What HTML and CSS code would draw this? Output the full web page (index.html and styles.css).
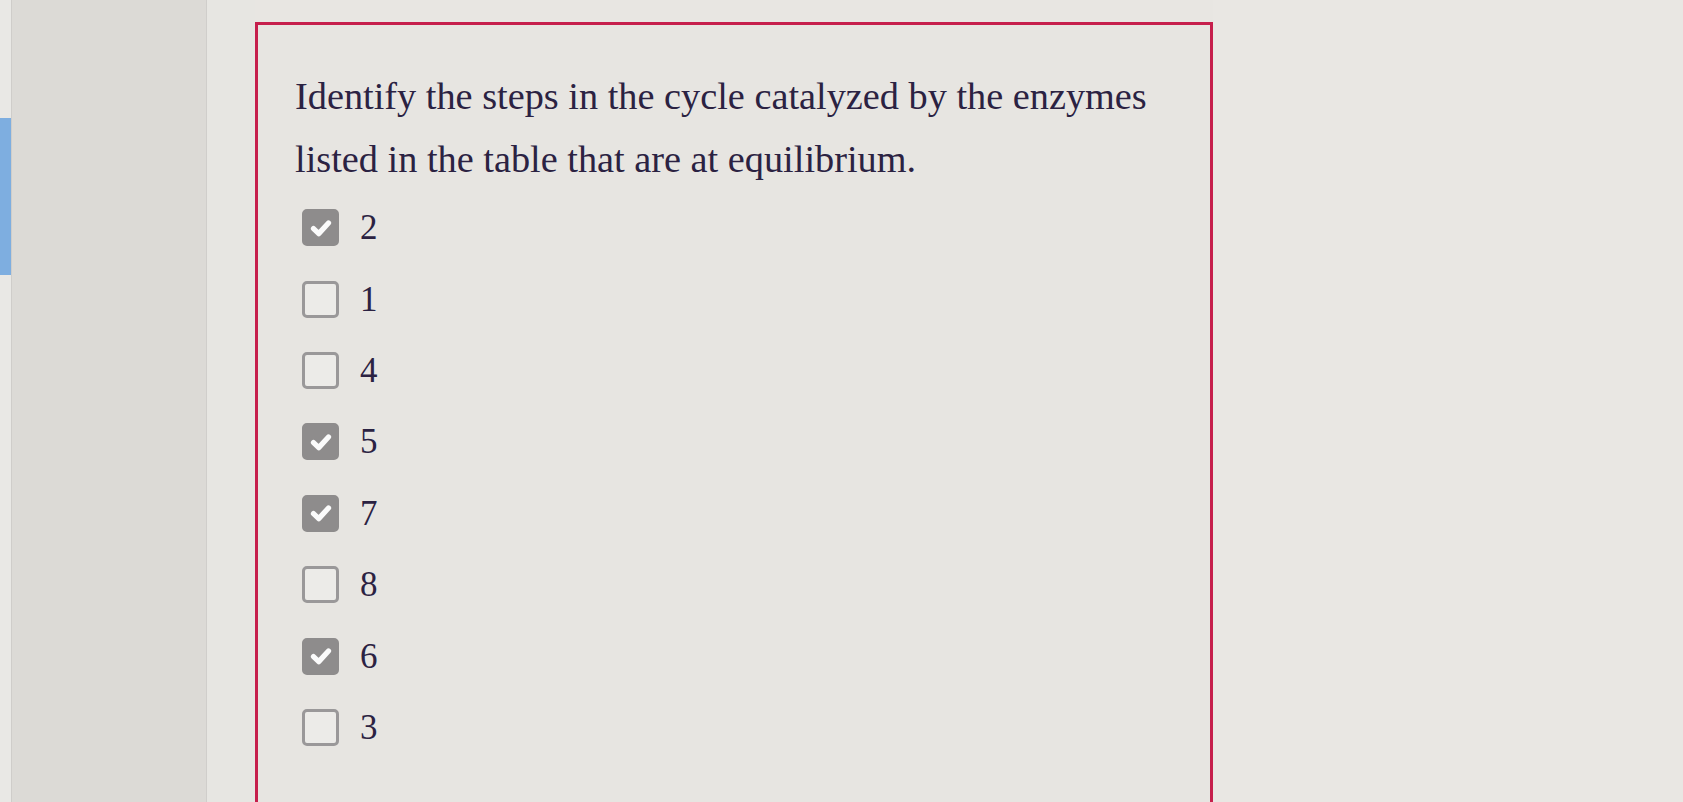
FILE: index.html
```html
<!DOCTYPE html>
<html lang="en">
<head>
<meta charset="utf-8">
<title>Question</title>
<link rel="stylesheet" href="styles.css">
</head>
<body>
<div class="screen">
  <div class="rail"><div class="rail-tab"></div></div>
  <aside class="sidebar"></aside>
  <div class="gutter"></div>
  <main class="question">
    <p class="prompt">Identify the steps in the cycle catalyzed by the enzymes listed in the table that are at equilibrium.</p>
    <ul class="choices">
      <li class="choice"><span class="box checked"><svg viewBox="0 0 24 24"><path d="M6 12.5 L10.2 16.5 L18 8"/></svg></span><span class="label">2</span></li>
      <li class="choice"><span class="box"></span><span class="label">1</span></li>
      <li class="choice"><span class="box"></span><span class="label">4</span></li>
      <li class="choice"><span class="box checked"><svg viewBox="0 0 24 24"><path d="M6 12.5 L10.2 16.5 L18 8"/></svg></span><span class="label">5</span></li>
      <li class="choice"><span class="box checked"><svg viewBox="0 0 24 24"><path d="M6 12.5 L10.2 16.5 L18 8"/></svg></span><span class="label">7</span></li>
      <li class="choice"><span class="box"></span><span class="label">8</span></li>
      <li class="choice"><span class="box checked"><svg viewBox="0 0 24 24"><path d="M6 12.5 L10.2 16.5 L18 8"/></svg></span><span class="label">6</span></li>
      <li class="choice"><span class="box"></span><span class="label">3</span></li>
    </ul>
  </main>
  <div class="right"></div>
</div>
</body>
</html>
```

FILE: styles.css
```css
html, body {
  margin: 0;
  padding: 0;
  height: 100%;
  overflow: hidden;
  background: #e8e6e2;
}

.screen {
  display: flex;
  height: 802px;
  width: 1683px;
}

.rail {
  width: 11px;
  flex: none;
  background: #e9e8e5;
  padding-top: 118px;
  box-sizing: border-box;
}

.rail-tab {
  width: 13px;
  height: 157px;
  background: #7eaee0;
}

.sidebar {
  width: 194px;
  flex: none;
  background: #dcdad6;
  border-left: 1px solid #cfcdca;
  border-right: 1px solid #d0cecb;
}

.gutter {
  width: 48px;
  flex: none;
  background: #e7e6e2;
}

.question {
  flex: none;
  width: 958px;
  margin-top: 22px;
  border: 3px solid #c61f4c;
  border-bottom: none;
  background: #e7e5e1;
  padding: 40px 26px 0 37px;
  box-sizing: border-box;
  font-family: "Liberation Serif", "Times New Roman", serif;
  color: #2b2242;
}

.prompt {
  margin: 0;
  font-size: 38.3px;
  line-height: 63px;
}

.choices {
  list-style: none;
  margin: 0;
  padding: 1px 0 0 7px;
}

.choice {
  display: flex;
  align-items: center;
  gap: 21px;
  height: 71.4px;
}

.box {
  width: 31px;
  height: 31px;
  border: 3px solid #9a9899;
  border-radius: 5px;
  background: #ecebe8;
  display: flex;
  align-items: center;
  justify-content: center;
}

.box.checked {
  background: #8e8c8c;
  border-color: #8e8c8c;
}

.box svg {
  width: 30px;
  height: 30px;
  fill: none;
  stroke: #fbfbfb;
  stroke-width: 4.2;
  stroke-linecap: round;
  stroke-linejoin: round;
}

.label {
  font-size: 35px;
  line-height: 1;
}

.right {
  flex: 1;
  background: #e9e7e3;
}
```
